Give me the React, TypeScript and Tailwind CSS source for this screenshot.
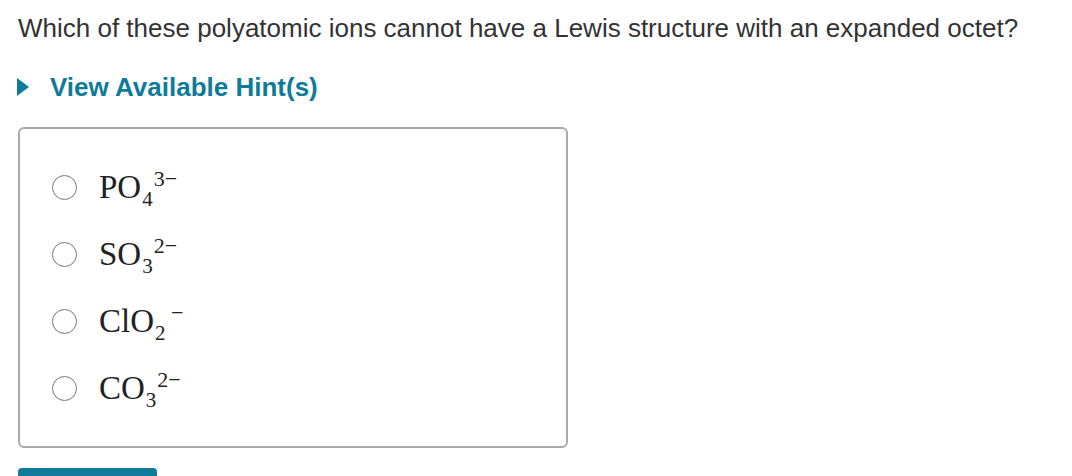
import React from 'react';

const options = [
  { base: 'PO', sub: '4', sup: '3−' },
  { base: 'SO', sub: '3', sup: '2−' },
  { base: 'ClO', sub: '2', sup: '\u2009−' },
  { base: 'CO', sub: '3', sup: '2−' },
];

function Formula({ base, sub, sup }: { base: string; sub: string; sup: string }) {
  return (
    <span className="inline-flex items-baseline font-['Liberation_Serif',serif] text-[33px] leading-none text-[#222]">
      <span>{base}</span>
      <span className="relative top-[8px] ml-[1px] text-[21px]">{sub}</span>
      <span className="relative top-[-12px] ml-[1px] text-[22px] whitespace-pre">{sup}</span>
    </span>
  );
}

export default function App() {
  return (
    <div className="w-[1072px] h-[476px] overflow-hidden bg-white px-[18px] pt-[13px] font-['Liberation_Sans',Arial,sans-serif]">
      <p className="text-[26px] leading-[30px] text-[#333]">
        Which of these polyatomic ions cannot have a Lewis structure with an expanded octet?
      </p>

      <div className="mt-[29px] flex items-center gap-[21px]">
        <svg width="12" height="18" viewBox="0 0 12 18" className="ml-[-1px]">
          <polygon points="0,0 12,9 0,18" fill="#0f7b9b" />
        </svg>
        <span className="text-[26px] font-bold leading-[30px] text-[#0f7b9b]">View Available Hint(s)</span>
      </div>

      <div className="mt-[25px] w-[550px] h-[321px] rounded-[6px] border-2 border-[#aaa] pl-[32px] pt-[39px]">
        <div className="flex flex-col gap-[29px]">
          {options.map((o, i) => (
            <label key={i} className="flex h-[38px] items-center gap-[22px]">
              <span className="h-[25px] w-[25px] rounded-full border border-[#777] bg-white" />
              <Formula {...o} />
            </label>
          ))}
        </div>
      </div>

      <div className="mt-[20px] h-[20px] w-[139px] rounded-t-[4px] bg-[#0f7b9b]" />
    </div>
  );
}
